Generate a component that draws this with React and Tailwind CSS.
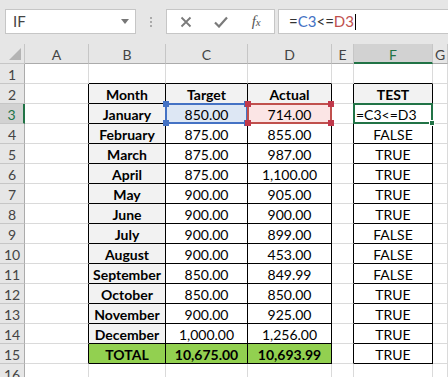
import React from "react";

const rows = [
  ["Month", "Target", "Actual", "TEST"],
  ["January", "850.00", "714.00", "=C3<=D3"],
  ["February", "875.00", "855.00", "FALSE"],
  ["March", "875.00", "987.00", "TRUE"],
  ["April", "875.00", "1,100.00", "TRUE"],
  ["May", "900.00", "905.00", "TRUE"],
  ["June", "900.00", "900.00", "TRUE"],
  ["July", "900.00", "899.00", "FALSE"],
  ["August", "900.00", "453.00", "FALSE"],
  ["September", "850.00", "849.99", "FALSE"],
  ["October", "850.00", "850.00", "TRUE"],
  ["November", "900.00", "925.00", "TRUE"],
  ["December", "1,000.00", "1,256.00", "TRUE"],
  ["TOTAL", "10,675.00", "10,693.99", "TRUE"],
];

const cols = ["A", "B", "C", "D", "E", "F", "G"];

function Handle({ pos, color }) {
  const p = {
    tl: "-top-[4px] -left-[4px]",
    tr: "-top-[4px] -right-[4px]",
    bl: "-bottom-[4px] -left-[4px]",
    br: "-bottom-[4px] -right-[4px]",
  }[pos];
  return <span className={`absolute w-[6px] h-[6px] ${p} ${color} z-10`} />;
}

function cellValue(r, c) {
  // r = excel row, c = column index (1 = A)
  if (r < 2 || r > 15) return null;
  const d = rows[r - 2];
  if (c === 2) return d[0];
  if (c === 3) return d[1];
  if (c === 4) return d[2];
  if (c === 6) return d[3];
  return null;
}

function Cell({ r, c }) {
  const inRange = r >= 2 && r <= 15;
  const rightBlack = inRange && c >= 1 && c <= 6;
  const tableCol = (c >= 2 && c <= 4) || c === 6;
  const bottomBlack = tableCol && r >= 1 && r <= 15;

  let bg = "bg-white";
  if (inRange && c === 2 && r < 15) bg = "bg-[#f2f2f2]";
  if (r === 2 && (c === 3 || c === 4 || c === 6)) bg = "bg-[#f2f2f2]";
  if (r === 15 && c >= 2 && c <= 4) bg = "bg-[#92d050]";

  const bold = (inRange && c === 2) || r === 2 || (r === 15 && c >= 2 && c <= 4);
  const val = cellValue(r, c);
  const formula = r === 3 && c === 6;

  return (
    <div
      className={`relative h-5 border-r border-b ${rightBlack ? "border-r-black" : "border-r-[#dadada]"} ${
        bottomBlack ? "border-b-black" : "border-b-[#dadada]"
      } ${bg} flex items-center pt-[2px] ${formula ? "justify-start pl-[2px]" : "justify-center"} text-[14px] leading-none text-black ${
        bold ? "font-bold" : ""
      }`}
    >
      {r === 3 && c === 3 && (
        <div className="absolute -top-[1px] -left-[1px] -right-[1px] -bottom-[1px] border-2 border-[#4472c4] bg-[#dde7f4]">
          <Handle pos="tl" color="bg-[#4472c4]" />
          <Handle pos="tr" color="bg-[#4472c4]" />
          <Handle pos="bl" color="bg-[#4472c4]" />
          <Handle pos="br" color="bg-[#4472c4]" />
        </div>
      )}
      {r === 3 && c === 4 && (
        <div className="absolute -top-[1px] -left-[1px] -right-[1px] -bottom-[1px] border-2 border-[#c0504d] bg-[#fbe5e5]">
          <Handle pos="tl" color="bg-[#c0394b]" />
          <Handle pos="tr" color="bg-[#c0394b]" />
          <Handle pos="bl" color="bg-[#c0394b]" />
          <Handle pos="br" color="bg-[#c0394b]" />
        </div>
      )}
      {formula && (
        <div className="absolute -top-[1px] -left-[1px] -right-[1px] -bottom-[1px] border-2 border-[#217346]">
          <span className="absolute -bottom-[4px] -right-[4px] w-[6px] h-[6px] bg-[#217346] border border-white z-10" />
        </div>
      )}
      {val && <span className="relative z-20">{val}</span>}
    </div>
  );
}

export default function App() {
  const excelRows = Array.from({ length: 16 }, (_, i) => i + 1);

  return (
    <div
      className="w-[448px] h-[377px] overflow-hidden bg-white select-none"
      style={{ fontFamily: "Lato, 'Noto Sans', sans-serif" }}
    >
      {/* formula bar */}
      <div className="h-[44px] bg-[#e6e6e6] flex items-start pt-[9px] pl-[5px] gap-0">
        <div className="w-[131px] h-[25px] bg-white border border-[#c6c6c6] flex items-center justify-between pl-[7px] pr-[6px]">
          <span className="text-[15px] text-[#444]">IF</span>
          <svg width="8" height="5" viewBox="0 0 8 5">
            <path d="M0 0 L8 0 L4 5 Z" fill="#777" />
          </svg>
        </div>
        <div className="w-[30px] h-[25px] flex flex-col items-center justify-center gap-[2px]">
          <span className="w-[2px] h-[2px] bg-[#aaa]" />
          <span className="w-[2px] h-[2px] bg-[#aaa]" />
          <span className="w-[2px] h-[2px] bg-[#aaa]" />
        </div>
        <div className="w-[109px] h-[25px] bg-white border border-[#c6c6c6] flex items-center">
          <div className="w-[38px] flex justify-center">
            <svg width="12" height="12" viewBox="0 0 12 12">
              <path d="M1.5 1.5 L10.5 10.5 M10.5 1.5 L1.5 10.5" stroke="#7a7a7a" strokeWidth="1.8" />
            </svg>
          </div>
          <div className="w-[34px] flex justify-center">
            <svg width="14" height="12" viewBox="0 0 14 12">
              <path d="M1 6.5 L5 10.5 L13 1.5" stroke="#7a7a7a" strokeWidth="2.2" fill="none" />
            </svg>
          </div>
          <div className="w-[36px] flex justify-center">
            <span
              className="text-[15px] italic text-[#555]"
              style={{ fontFamily: "'Liberation Serif', serif" }}
            >
              f<span className="text-[11px]">x</span>
            </span>
          </div>
        </div>
        <div className="ml-[3px] flex-1 h-[25px] bg-white border border-[#c6c6c6] border-r-0 flex items-center pl-[10px] text-[15px]">
          <span className="text-[#333]">=</span>
          <span className="text-[#4472c4]">C3</span>
          <span className="text-[#333]">&lt;=</span>
          <span className="text-[#c0504d]">D3</span>
          <span className="w-[1px] h-[16px] bg-black ml-[1px]" />
        </div>
      </div>

      {/* sheet grid */}
      <div className="grid grid-cols-[25px_64px_77px_82px_84px_22px_79px_1fr]">
        {/* column headers */}
        <div className="relative h-5 bg-[#e6e6e6] border-r border-b border-[#c6c6c6]">
          <svg className="absolute right-[3px] bottom-[3px]" width="12" height="12" viewBox="0 0 12 12">
            <path d="M12 0 L12 12 L0 12 Z" fill="#b4b4b4" />
          </svg>
        </div>
        {cols.map((c) =>
          c === "F" ? (
            <div
              key={c}
              className="h-5 bg-[#d2d2d2] border-r border-r-[#c6c6c6] border-b-2 border-b-[#217346] flex items-center justify-center pt-[2px] text-[14px] text-[#217346]"
            >
              {c}
            </div>
          ) : (
            <div
              key={c}
              className="h-5 bg-[#e6e6e6] border-r border-r-[#c6c6c6] border-b border-b-[#ababab] flex items-center justify-center pt-[2px] text-[14px] text-[#444]"
            >
              {c}
            </div>
          )
        )}

        {excelRows.map((r) => (
          <React.Fragment key={r}>
            {r === 3 ? (
              <div className="h-5 bg-[#d2d2d2] border-r-2 border-r-[#217346] border-b border-b-[#c6c6c6] flex items-center justify-center pt-[2px] text-[14px] text-[#217346]">
                {r}
              </div>
            ) : (
              <div className="h-5 bg-[#e6e6e6] border-r border-r-[#ababab] border-b border-b-[#c6c6c6] flex items-center justify-center pt-[2px] text-[14px] text-[#444]">
                {r}
              </div>
            )}
            {cols.map((_, i) => (
              <Cell key={i} r={r} c={i + 1} />
            ))}
          </React.Fragment>
        ))}
      </div>
    </div>
  );
}
